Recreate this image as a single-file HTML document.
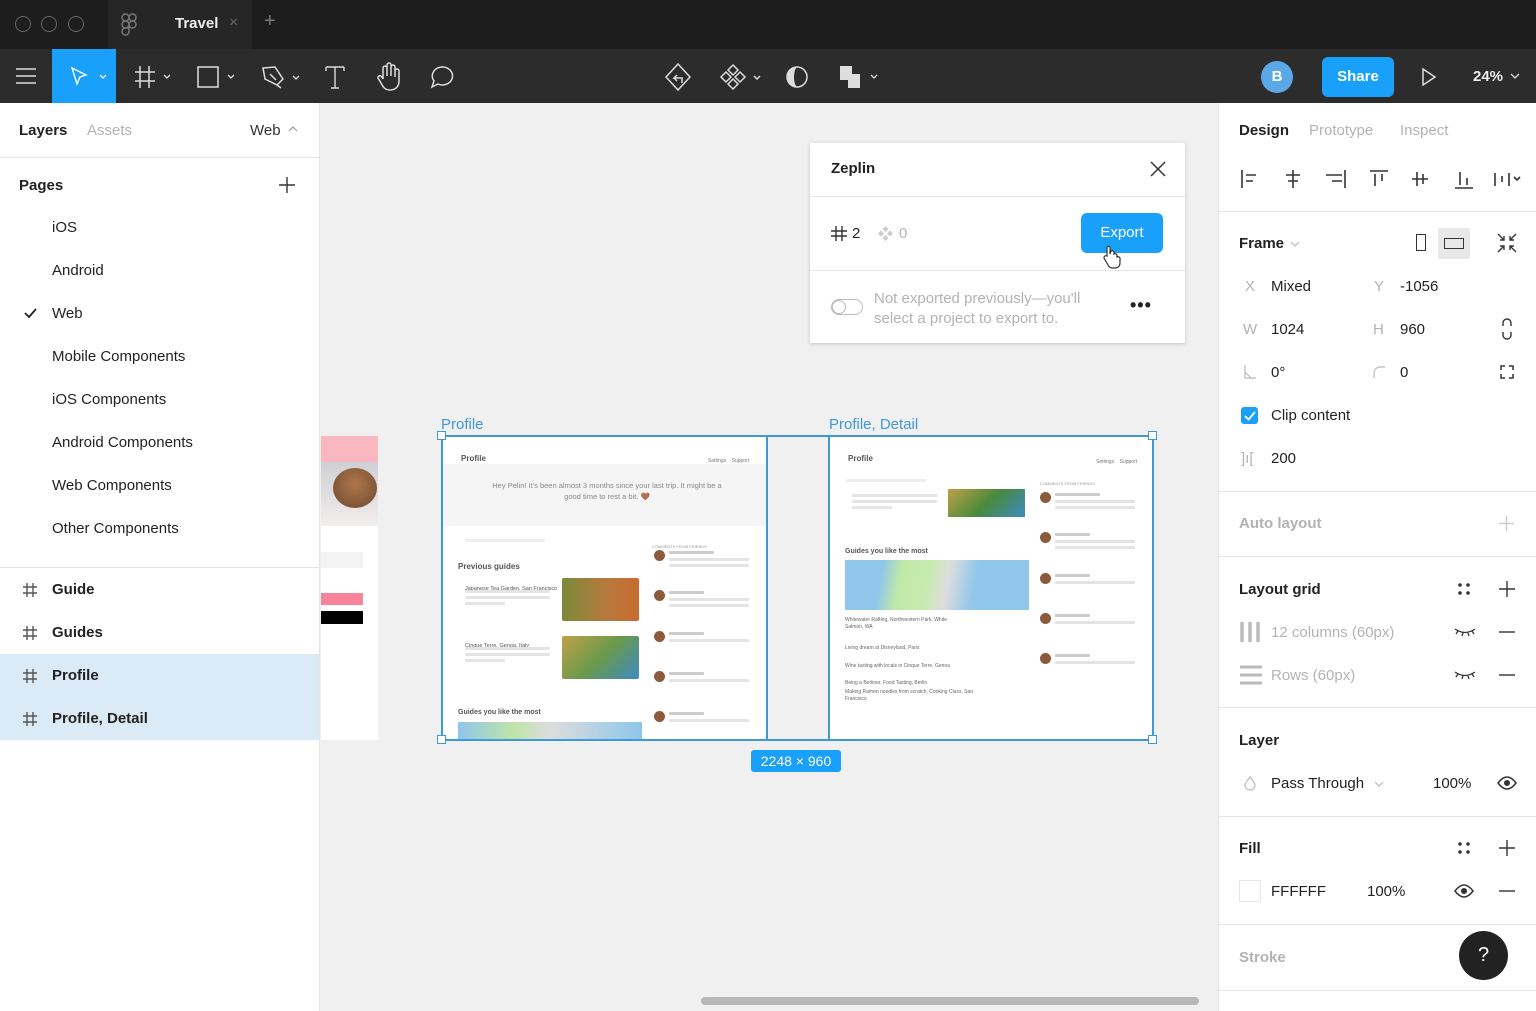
<!DOCTYPE html>
<html><head><meta charset="utf-8"><style>
*{box-sizing:border-box;margin:0;padding:0}
body{width:1536px;height:1011px;overflow:hidden;background:#f0f0f1;font-family:"Liberation Sans",sans-serif;position:relative;color:#222}
.a{position:absolute}
.t{position:absolute;font-size:15px;white-space:nowrap;line-height:18px}
.b{font-weight:bold}
.g{color:#b3b3b3}
.hr{position:absolute;height:1px;background:#e6e6e6}
svg{position:absolute;overflow:visible}
.fr{position:absolute;background:#fff;border:2px solid #3d9ad6;overflow:hidden}
.ln{position:absolute;height:3px;background:#e4e4e4;border-radius:1px}
.av{position:absolute;width:11px;height:11px;border-radius:50%;background:#8a5a3a}
.h{position:absolute;width:9px;height:9px;background:#fff;border:1.5px solid #3d9ad6}
</style></head><body>
<!-- title bar -->
<div class="a" style="left:0;top:0;width:1536px;height:49px;background:#1d1d1d"></div>
<div class="a" style="left:108px;top:0;width:144px;height:49px;background:#262626"></div>
<div class="a" style="left:15px;top:16px;width:16px;height:16px;border:1.5px solid #666;border-radius:50%"></div>
<div class="a" style="left:41px;top:16px;width:16px;height:16px;border:1.5px solid #666;border-radius:50%"></div>
<div class="a" style="left:68px;top:16px;width:16px;height:16px;border:1.5px solid #666;border-radius:50%"></div>
<svg style="left:120px;top:13px" width="18" height="24"><g fill="none" stroke="#777" stroke-width="1.5"><rect x="2" y="1" width="7" height="7" rx="3.5"/><rect x="9" y="1" width="7" height="7" rx="3.5"/><rect x="2" y="8" width="7" height="7" rx="3.5"/><circle cx="12.5" cy="11.5" r="3.5"/><path d="M5.5 15a3.5 3.5 0 1 0 3.5 3.5V15z"/></g></svg>
<div class="t b" style="left:175px;top:15px;color:#eee;font-size:15px">Travel</div>
<div class="t" style="left:229px;top:14px;color:#666;font-size:16px">×</div>
<div class="t" style="left:264px;top:12px;color:#777;font-size:20px">+</div>
<!-- toolbar -->
<div class="a" style="left:0;top:49px;width:1536px;height:54px;background:#2c2c2c"></div>
<div class="a" style="left:52px;top:49px;width:64px;height:54px;background:#18a0fb"></div>
<svg style="left:16px;top:68px" width="20" height="16"><path d="M0 1h20M0 8h20M0 15h20" stroke="#ddd" stroke-width="1.6"/></svg>
<svg style="left:70px;top:66px" width="40" height="22"><path d="M2 2l14 7-6 2-3 7z" fill="none" stroke="#fff" stroke-width="1.4"/><path d="M30 9l3 3 3-3" fill="none" stroke="#fff" stroke-width="1.3"/></svg>
<svg style="left:134px;top:65px" width="40" height="24"><path d="M6 1v22M15 1v22M1 7h20M1 16h20" stroke="#ddd" stroke-width="1.5"/><path d="M30 10l3 3 3-3" fill="none" stroke="#ddd" stroke-width="1.3"/></svg>
<svg style="left:197px;top:66px" width="42" height="22"><rect x="1" y="1" width="20" height="20" fill="none" stroke="#ddd" stroke-width="1.5"/><path d="M31 9l3 3 3-3" fill="none" stroke="#ddd" stroke-width="1.3"/></svg>
<svg style="left:261px;top:65px" width="42" height="24"><path d="M2 3l12-1 8 12-6 6-12-6z M9 9l6 6M16 20l4 3" fill="none" stroke="#ddd" stroke-width="1.5"/><path d="M32 11l3 3 3-3" fill="none" stroke="#ddd" stroke-width="1.3"/></svg>
<svg style="left:325px;top:65px" width="20" height="24"><path d="M1 2h18M10 2v21M6 23h8M1 2v4M19 2v4" fill="none" stroke="#ddd" stroke-width="1.4"/></svg>
<svg style="left:376px;top:62px" width="26" height="30"><path d="M7 17V6a2 2 0 0 1 4 0v8V3a2 2 0 0 1 4 0v11V5a2 2 0 0 1 4 0v10V9a2 2 0 0 1 4 0v10c0 6-4 9-9 9s-7-3-9-7l-3-5a2 2 0 0 1 3-2l2 3" fill="none" stroke="#ddd" stroke-width="1.5"/></svg>
<svg style="left:430px;top:65px" width="24" height="24"><path d="M12 2a10 9 0 1 1-4 17l-6 3 2-6A10 9 0 0 1 12 2z" fill="none" stroke="#ddd" stroke-width="1.5"/></svg>
<svg style="left:664px;top:63px" width="28" height="28"><path d="M14 1l12 13-12 13L2 14z" fill="none" stroke="#ddd" stroke-width="1.5"/><path d="M18 20v-5h-8l3-3M10 15l3 3" fill="none" stroke="#ddd" stroke-width="1.5"/></svg>
<svg style="left:720px;top:64px" width="46" height="26"><g fill="none" stroke="#ddd" stroke-width="1.5"><path d="M13 1l5 5-5 5-5-5zM13 15l5 5-5 5-5-5zM6 8l5 5-5 5-5-5zM20 8l5 5-5 5-5-5z"/><path d="M34 12l3 3 3-3"/></g></svg>
<svg style="left:785px;top:65px" width="24" height="24"><circle cx="12" cy="12" r="10" fill="none" stroke="#ddd" stroke-width="1.5"/><path d="M12 2a10 10 0 0 0 0 20c-4-3-4-17 0-20z" fill="#ddd"/></svg>
<svg style="left:839px;top:65px" width="44" height="24"><path d="M1 1h12v8h8v14H9v-8H1z" fill="#ddd"/><path d="M32 10l3 3 3-3" fill="none" stroke="#ddd" stroke-width="1.3"/></svg>
<div class="a" style="left:1261px;top:61px;width:32px;height:32px;border-radius:50%;background:#5ba8e6;color:#fff;font-weight:bold;font-size:15px;text-align:center;line-height:32px">B</div>
<div class="a" style="left:1322px;top:57px;width:72px;height:40px;border-radius:6px;background:#18a0fb;color:#fff;font-weight:bold;font-size:15px;text-align:center;line-height:40px">Share</div>
<svg style="left:1421px;top:68px" width="16" height="18"><path d="M2 1l12 8-12 8z" fill="none" stroke="#ddd" stroke-width="1.5"/></svg>
<div class="t b" style="left:1473px;top:68px;color:#eee;font-size:15px">24%</div>
<svg style="left:1510px;top:73px" width="10" height="8"><path d="M1 1l4 4 4-4" fill="none" stroke="#ddd" stroke-width="1.3"/></svg>
<!-- left panel -->
<div class="a" style="left:0;top:103px;width:320px;height:908px;background:#fff;border-right:1px solid #e5e5e5"></div>
<div class="t b" style="left:19px;top:122px">Layers</div>
<div class="t g" style="left:87px;top:122px">Assets</div>
<div class="t" style="left:250px;top:122px;color:#333">Web</div>
<svg style="left:288px;top:126px" width="10" height="6"><path d="M1 5l4-4 4 4" fill="none" stroke="#999" stroke-width="1.2"/></svg>
<div class="hr" style="left:0;top:157px;width:320px"></div>
<div class="t b" style="left:19px;top:177px">Pages</div>
<svg style="left:279px;top:177px" width="16" height="16"><path d="M8 0v16M0 8h16" stroke="#333" stroke-width="1.4"/></svg>
<div class="t" style="left:52px;top:219px">iOS</div>
<div class="t" style="left:52px;top:262px">Android</div>
<svg style="left:24px;top:308px" width="13" height="11"><path d="M1 5l4 4 7-8" fill="none" stroke="#222" stroke-width="1.8"/></svg>
<div class="t" style="left:52px;top:305px">Web</div>
<div class="t" style="left:52px;top:348px">Mobile Components</div>
<div class="t" style="left:52px;top:391px">iOS Components</div>
<div class="t" style="left:52px;top:434px">Android Components</div>
<div class="t" style="left:52px;top:477px">Web Components</div>
<div class="t" style="left:52px;top:520px">Other Components</div>
<div class="hr" style="left:0;top:567px;width:320px"></div>
<div class="a" style="left:0;top:654px;width:319px;height:86px;background:#dbeaf7"></div>
<div class="t b" style="left:52px;top:581px">Guide</div>
<div class="t b" style="left:52px;top:624px">Guides</div>
<div class="t b" style="left:52px;top:667px">Profile</div>
<div class="t b" style="left:52px;top:710px">Profile, Detail</div>
<svg style="left:22px;top:582px" width="16" height="16"><path d="M5 1v14M11 1v14M1 5h14M1 11h14" stroke="#555" stroke-width="1.4"/></svg>
<svg style="left:22px;top:625px" width="16" height="16"><path d="M5 1v14M11 1v14M1 5h14M1 11h14" stroke="#555" stroke-width="1.4"/></svg>
<svg style="left:22px;top:668px" width="16" height="16"><path d="M5 1v14M11 1v14M1 5h14M1 11h14" stroke="#555" stroke-width="1.4"/></svg>
<svg style="left:22px;top:711px" width="16" height="16"><path d="M5 1v14M11 1v14M1 5h14M1 11h14" stroke="#555" stroke-width="1.4"/></svg>
<!-- canvas partial frame -->
<div class="a" style="left:321px;top:436px;width:57px;height:304px;background:#fff"></div>
<div class="a" style="left:321px;top:436px;width:57px;height:26px;background:#f9b7c0"></div>
<div class="a" style="left:321px;top:462px;width:57px;height:64px;background:linear-gradient(#cfcfd3,#f3eded)"></div>
<div class="a" style="left:333px;top:468px;width:44px;height:40px;border-radius:50%;background:radial-gradient(circle at 50% 40%,#b0764a,#6b4a30)"></div>
<div class="a" style="left:321px;top:552px;width:42px;height:16px;background:#f3f3f3"></div>
<div class="a" style="left:321px;top:593px;width:42px;height:12px;background:#f7849a"></div>
<div class="a" style="left:321px;top:611px;width:42px;height:13px;background:#000"></div>
<!-- frame labels -->
<div class="t" style="left:441px;top:416px;color:#3d9ad6;font-size:15px">Profile</div>
<div class="t" style="left:829px;top:416px;color:#3d9ad6;font-size:15px">Profile, Detail</div>
<!-- selection box -->
<div class="a" style="left:441px;top:435px;width:713px;height:306px;border:2px solid #3d9ad6"></div>
<!-- frame 1 -->
<div class="fr" style="left:441px;top:435px;width:327px;height:306px">
 <div class="t b" style="left:18px;top:13px;font-size:8px;color:#555">Profile</div>
 <div class="t" style="left:265px;top:15px;font-size:5px;color:#777">Settings &nbsp;&nbsp; Support</div>
 <div class="a" style="left:0;top:27px;width:325px;height:62px;background:#f5f5f5"></div>
 <div class="t" style="left:44px;top:43px;font-size:7.5px;color:#888;line-height:11px;text-align:center;width:240px;white-space:normal">Hey Pelin! It's been almost 3 months since your last trip. It might be a good time to rest a bit. 🤎</div>
 <div class="ln" style="left:22px;top:102px;width:80px;background:#eee"></div>
 <div class="t" style="left:209px;top:101px;font-size:4px;color:#999">COMMENTS FROM FRIENDS</div>
 <div class="t b" style="left:15px;top:121px;font-size:8px;color:#555">Previous guides</div>
 <div class="t" style="left:22px;top:143px;font-size:5.5px;color:#555">Japanese Tea Garden, San Francisco</div>
 <div class="ln" style="left:22px;top:153px;width:85px"></div><div class="ln" style="left:22px;top:159px;width:85px"></div><div class="ln" style="left:22px;top:165px;width:40px"></div>
 <div class="a" style="left:119px;top:141px;width:77px;height:43px;background:linear-gradient(90deg,#7a8a3a,#b8793d 60%,#c96a2e);border-radius:2px"></div>
 <div class="t" style="left:22px;top:200px;font-size:5.5px;color:#555">Cinque Terre, Genoa, Italy</div>
 <div class="ln" style="left:22px;top:210px;width:85px"></div><div class="ln" style="left:22px;top:216px;width:85px"></div><div class="ln" style="left:22px;top:222px;width:40px"></div>
 <div class="a" style="left:119px;top:199px;width:77px;height:43px;background:linear-gradient(135deg,#c0a04a,#6a9a4a 50%,#3d8bc3);border-radius:2px"></div>
 <div class="t b" style="left:15px;top:267px;font-size:7px;color:#555">Guides you like the most</div>
 <div class="a" style="left:15px;top:285px;width:184px;height:22px;background:linear-gradient(90deg,#8fc6ea,#bfe4a8 30%,#ddd 50%,#8fc6ea)"></div>
 <div class="av" style="left:211px;top:113px"></div><div class="av" style="left:211px;top:153px"></div><div class="av" style="left:211px;top:194px"></div><div class="av" style="left:211px;top:234px"></div><div class="av" style="left:211px;top:274px"></div>
 <div class="ln" style="left:226px;top:114px;width:45px;background:#ccc"></div><div class="ln" style="left:226px;top:121px;width:80px"></div><div class="ln" style="left:226px;top:127px;width:80px"></div>
 <div class="ln" style="left:226px;top:154px;width:35px;background:#ccc"></div><div class="ln" style="left:226px;top:161px;width:80px"></div><div class="ln" style="left:226px;top:167px;width:80px"></div>
 <div class="ln" style="left:226px;top:195px;width:35px;background:#ccc"></div><div class="ln" style="left:226px;top:202px;width:80px"></div>
 <div class="ln" style="left:226px;top:235px;width:35px;background:#ccc"></div><div class="ln" style="left:226px;top:242px;width:80px"></div>
 <div class="ln" style="left:226px;top:275px;width:35px;background:#ccc"></div><div class="ln" style="left:226px;top:282px;width:80px"></div>
</div>
<!-- frame 2 -->
<div class="fr" style="left:828px;top:435px;width:326px;height:306px">
 <div class="t b" style="left:18px;top:13px;font-size:8px;color:#555">Profile</div>
 <div class="t" style="left:266px;top:16px;font-size:5px;color:#777">Settings &nbsp;&nbsp; Support</div>
 <div class="ln" style="left:16px;top:42px;width:80px;background:#eee"></div>
 <div class="t" style="left:210px;top:38px;font-size:4px;color:#999">COMMENTS FROM FRIENDS</div>
 <div class="ln" style="left:22px;top:57px;width:85px"></div><div class="ln" style="left:22px;top:63px;width:85px"></div><div class="ln" style="left:22px;top:69px;width:40px"></div>
 <div class="a" style="left:118px;top:52px;width:77px;height:28px;background:linear-gradient(135deg,#c0a04a,#4a8a3a 50%,#3d8bc3)"></div>
 <div class="t b" style="left:15px;top:106px;font-size:7px;color:#555">Guides you like the most</div>
 <div class="a" style="left:15px;top:123px;width:184px;height:50px;background:linear-gradient(100deg,#8fc6ea 20%,#bfe9a8 30%,#c8eab0 45%,#ddd 55%,#8fc6ea 70%)"></div>
 <div class="t" style="left:15px;top:180px;font-size:5px;color:#666;line-height:7px;white-space:normal;width:120px">Whitewater Rafting, Northwestern Park, White Salmon, WA</div>
 <div class="t" style="left:15px;top:202px;font-size:5px;color:#666">Living dream at Disneyland, Paris</div>
 <div class="t" style="left:15px;top:220px;font-size:5px;color:#666">Wine tasting with locals in Cinque Terre, Genoa</div>
 <div class="t" style="left:15px;top:237px;font-size:5px;color:#666">Being a Berliner, Food Tasting, Berlin</div>
 <div class="t" style="left:15px;top:252px;font-size:5px;color:#666;line-height:7px;white-space:normal;width:130px">Making Ramen noodles from scratch, Cooking Class, San Francisco</div>
 <div class="av" style="left:210px;top:55px"></div><div class="av" style="left:210px;top:95px"></div><div class="av" style="left:210px;top:136px"></div><div class="av" style="left:210px;top:176px"></div><div class="av" style="left:210px;top:216px"></div>
 <div class="ln" style="left:225px;top:56px;width:45px;background:#ccc"></div><div class="ln" style="left:225px;top:63px;width:80px"></div><div class="ln" style="left:225px;top:69px;width:80px"></div>
 <div class="ln" style="left:225px;top:96px;width:35px;background:#ccc"></div><div class="ln" style="left:225px;top:103px;width:80px"></div><div class="ln" style="left:225px;top:109px;width:80px"></div>
 <div class="ln" style="left:225px;top:137px;width:35px;background:#ccc"></div><div class="ln" style="left:225px;top:144px;width:80px"></div>
 <div class="ln" style="left:225px;top:177px;width:35px;background:#ccc"></div><div class="ln" style="left:225px;top:184px;width:80px"></div>
 <div class="ln" style="left:225px;top:217px;width:35px;background:#ccc"></div><div class="ln" style="left:225px;top:224px;width:80px"></div>
</div>
<div class="h" style="left:437px;top:431px"></div><div class="h" style="left:1148px;top:431px"></div>
<div class="h" style="left:437px;top:735px"></div><div class="h" style="left:1148px;top:735px"></div>
<div class="a" style="left:751px;top:750px;width:90px;height:22px;background:#18a0fb;border-radius:3px;color:#fff;font-size:14px;text-align:center;line-height:22px">2248 × 960</div>
<!-- zeplin popup -->
<div class="a" style="left:810px;top:143px;width:375px;height:200px;background:#fff;box-shadow:0 1px 4px rgba(0,0,0,.18);border-radius:2px"></div>
<div class="t b" style="left:831px;top:160px">Zeplin</div>
<svg style="left:1150px;top:161px" width="16" height="16"><path d="M1 1l14 14M15 1L1 15" stroke="#333" stroke-width="1.5"/></svg>
<div class="hr" style="left:810px;top:196px;width:375px"></div>
<svg style="left:831px;top:226px" width="16" height="15"><path d="M5 0v15M11 0v15M0 5h16M0 10h16" stroke="#333" stroke-width="1.4"/></svg>
<div class="t" style="left:852px;top:225px">2</div>
<svg style="left:878px;top:226px" width="15" height="15"><g fill="#ccc"><path d="M7.5 0l3 3-3 3-3-3zM7.5 9l3 3-3 3-3-3zM3 4.5l3 3-3 3-3-3zM12 4.5l3 3-3 3-3-3z"/></g></svg>
<div class="t g" style="left:899px;top:225px">0</div>
<div class="a" style="left:1081px;top:213px;width:82px;height:40px;background:#18a0fb;border-radius:6px;color:#fff;font-size:15px;text-align:center;line-height:40px">Export</div>
<svg style="left:1101px;top:244px" width="20" height="24"><path d="M6 10V3a2 2 0 0 1 3 0v7l1-3a2 2 0 0 1 3 1v2a2 2 0 0 1 3 1v2a2 2 0 0 1 3 1v5c0 3-2 5-5 5h-3c-2 0-3-1-4-3L3 14a2 2 0 0 1 3-2z" fill="#fff" stroke="#333" stroke-width="1.2"/></svg>
<div class="hr" style="left:810px;top:270px;width:375px"></div>
<div class="a" style="left:831px;top:299px;width:32px;height:16px;border:1.5px solid #bbb;border-radius:8px"></div>
<div class="a" style="left:832px;top:300px;width:14px;height:14px;border:1.5px solid #bbb;border-radius:50%"></div>
<div class="t g" style="left:874px;top:289px;line-height:20px">Not exported previously—you'll<br>select a project to export to.</div>
<div class="t b" style="left:1130px;top:296px;font-size:18px;letter-spacing:1px">•••</div>
<!-- scrollbar -->
<div class="a" style="left:701px;top:997px;width:498px;height:8px;border-radius:4px;background:#b7b7b7"></div>
<!-- right panel -->
<div class="a" style="left:1218px;top:103px;width:318px;height:908px;background:#fff;border-left:1px solid #e5e5e5"></div>
<div class="t b" style="left:1239px;top:122px">Design</div>
<div class="t g" style="left:1309px;top:122px">Prototype</div>
<div class="t g" style="left:1400px;top:122px">Inspect</div>
<svg style="left:1240px;top:168px" width="290" height="22"><g stroke="#333" stroke-width="1.6" fill="none">
<path d="M2 2v18M6 7h10M6 13h7"/>
<path d="M53 2v18M46 7h14M48 13h10"/>
<path d="M105 2v18M86 7h16M92 13h10"/>
<path d="M130 3h18M135 6v12M142 6v7"/>
<path d="M172 11h16M177 4v14M183 6v10"/>
<path d="M215 20h18M220 4v13M227 10v7"/>
<path d="M255 5v13M262 8v6M269 5v13M274 9l3 3 3-3"/></g></svg>
<div class="hr" style="left:1218px;top:211px;width:318px"></div>
<div class="t b" style="left:1239px;top:235px">Frame</div>
<svg style="left:1290px;top:241px" width="10" height="6"><path d="M1 1l4 4 4-4" fill="none" stroke="#bbb" stroke-width="1.2"/></svg>
<div class="a" style="left:1416px;top:234px;width:10px;height:17px;border:1.5px solid #333"></div>
<div class="a" style="left:1438px;top:228px;width:32px;height:31px;background:#e8e8e8;border-radius:2px"></div>
<div class="a" style="left:1444px;top:238px;width:20px;height:11px;border:1.5px solid #333"></div>
<svg style="left:1497px;top:233px" width="20" height="20"><g stroke="#333" stroke-width="1.4" fill="none"><path d="M1 1l6 6M7 3v4H3M19 1l-6 6M13 3v4h4M1 19l6-6M3 13h4v4M19 19l-6-6M17 13h-4v4"/></g></svg>
<div class="t g" style="left:1245px;top:278px">X</div><div class="t" style="left:1271px;top:278px">Mixed</div>
<div class="t g" style="left:1374px;top:278px">Y</div><div class="t" style="left:1400px;top:278px">-1056</div>
<div class="t g" style="left:1243px;top:321px">W</div><div class="t" style="left:1271px;top:321px">1024</div>
<div class="t g" style="left:1373px;top:321px">H</div><div class="t" style="left:1400px;top:321px">960</div>
<svg style="left:1502px;top:319px" width="10" height="20"><path d="M1 7V4a4 4 0 0 1 8 0v3M1 13v3a4 4 0 0 0 8 0v-3" fill="none" stroke="#333" stroke-width="1.4"/></svg>
<svg style="left:1244px;top:365px" width="12" height="14"><path d="M1 0v13h11M1 7l6 6" fill="none" stroke="#bbb" stroke-width="1.2"/></svg>
<div class="t" style="left:1271px;top:364px">0°</div>
<svg style="left:1373px;top:366px" width="12" height="12"><path d="M1 12V7a6 6 0 0 1 6-6h5" fill="none" stroke="#bbb" stroke-width="1.2"/></svg>
<div class="t" style="left:1400px;top:364px">0</div>
<svg style="left:1500px;top:365px" width="14" height="14"><path d="M1 5V1h4M9 1h4v4M13 9v4H9M5 13H1V9" fill="none" stroke="#333" stroke-width="1.5"/></svg>
<div class="a" style="left:1241px;top:407px;width:17px;height:17px;background:#18a0fb;border-radius:3px"></div>
<svg style="left:1244px;top:411px" width="12" height="10"><path d="M1 5l3.5 3.5L11 1" fill="none" stroke="#fff" stroke-width="1.8"/></svg>
<div class="t" style="left:1271px;top:407px">Clip content</div>
<div class="t g" style="left:1241px;top:450px">]ı[</div>
<div class="t" style="left:1271px;top:450px">200</div>
<div class="hr" style="left:1218px;top:491px;width:318px"></div>
<div class="t b g" style="left:1239px;top:515px">Auto layout</div>
<svg style="left:1499px;top:516px" width="15" height="15"><path d="M7.5 0v15M0 7.5h15" stroke="#ccc" stroke-width="1.4"/></svg>
<div class="hr" style="left:1218px;top:556px;width:318px"></div>
<div class="t b" style="left:1239px;top:581px">Layout grid</div>
<svg style="left:1458px;top:583px" width="12" height="12"><g fill="#333"><circle cx="2" cy="2" r="1.8"/><circle cx="10" cy="2" r="1.8"/><circle cx="2" cy="10" r="1.8"/><circle cx="10" cy="10" r="1.8"/></g></svg>
<svg style="left:1499px;top:581px" width="16" height="16"><path d="M8 0v16M0 8h16" stroke="#333" stroke-width="1.4"/></svg>
<svg style="left:1240px;top:622px" width="22" height="20"><path d="M2 0v20M10 0v20M18 0v20" stroke="#bbb" stroke-width="3.5"/></svg>
<div class="t g" style="left:1271px;top:624px">12 columns (60px)</div>
<svg style="left:1454px;top:627px" width="22" height="10"><path d="M1 2q10 7 20 0M4 4l-2 3M9 6l-1 3M14 6l1 3M18 4l2 3" fill="none" stroke="#333" stroke-width="1.3"/></svg>
<svg style="left:1499px;top:631px" width="16" height="2"><path d="M0 1h16" stroke="#333" stroke-width="1.4"/></svg>
<svg style="left:1240px;top:665px" width="22" height="20"><path d="M0 2h22M0 10h22M0 18h22" stroke="#bbb" stroke-width="3"/></svg>
<div class="t g" style="left:1271px;top:667px">Rows (60px)</div>
<svg style="left:1454px;top:670px" width="22" height="10"><path d="M1 2q10 7 20 0M4 4l-2 3M9 6l-1 3M14 6l1 3M18 4l2 3" fill="none" stroke="#333" stroke-width="1.3"/></svg>
<svg style="left:1499px;top:674px" width="16" height="2"><path d="M0 1h16" stroke="#333" stroke-width="1.4"/></svg>
<div class="hr" style="left:1218px;top:707px;width:318px"></div>
<div class="t b" style="left:1239px;top:732px">Layer</div>
<svg style="left:1244px;top:776px" width="12" height="14"><path d="M6 1q5 6 5 8a5 5 0 0 1-10 0q0-2 5-8z" fill="none" stroke="#bbb" stroke-width="1.2"/></svg>
<div class="t" style="left:1271px;top:775px">Pass Through</div>
<svg style="left:1374px;top:781px" width="10" height="6"><path d="M1 1l4 4 4-4" fill="none" stroke="#bbb" stroke-width="1.2"/></svg>
<div class="t" style="left:1433px;top:775px">100%</div>
<svg style="left:1497px;top:776px" width="20" height="14"><path d="M1 7q9-12 18 0q-9 12-18 0z" fill="none" stroke="#333" stroke-width="1.5"/><circle cx="10" cy="7" r="3" fill="#333"/></svg>
<div class="hr" style="left:1218px;top:816px;width:318px"></div>
<div class="t b" style="left:1239px;top:840px">Fill</div>
<svg style="left:1458px;top:842px" width="12" height="12"><g fill="#333"><circle cx="2" cy="2" r="1.8"/><circle cx="10" cy="2" r="1.8"/><circle cx="2" cy="10" r="1.8"/><circle cx="10" cy="10" r="1.8"/></g></svg>
<svg style="left:1499px;top:840px" width="16" height="16"><path d="M8 0v16M0 8h16" stroke="#333" stroke-width="1.4"/></svg>
<div class="a" style="left:1239px;top:880px;width:22px;height:22px;border:1px solid #e8e8e8;background:#fff"></div>
<div class="t" style="left:1271px;top:883px">FFFFFF</div>
<div class="t" style="left:1367px;top:883px">100%</div>
<svg style="left:1454px;top:884px" width="20" height="14"><path d="M1 7q9-12 18 0q-9 12-18 0z" fill="none" stroke="#333" stroke-width="1.5"/><circle cx="10" cy="7" r="3" fill="#333"/></svg>
<svg style="left:1499px;top:890px" width="16" height="2"><path d="M0 1h16" stroke="#333" stroke-width="1.4"/></svg>
<div class="hr" style="left:1218px;top:924px;width:318px"></div>
<div class="t b g" style="left:1239px;top:949px">Stroke</div>
<div class="hr" style="left:1218px;top:990px;width:318px"></div>
<div class="a" style="left:1459px;top:931px;width:49px;height:49px;border-radius:50%;background:#222;color:#fff;font-size:20px;text-align:center;line-height:49px">?</div>
</body></html>
